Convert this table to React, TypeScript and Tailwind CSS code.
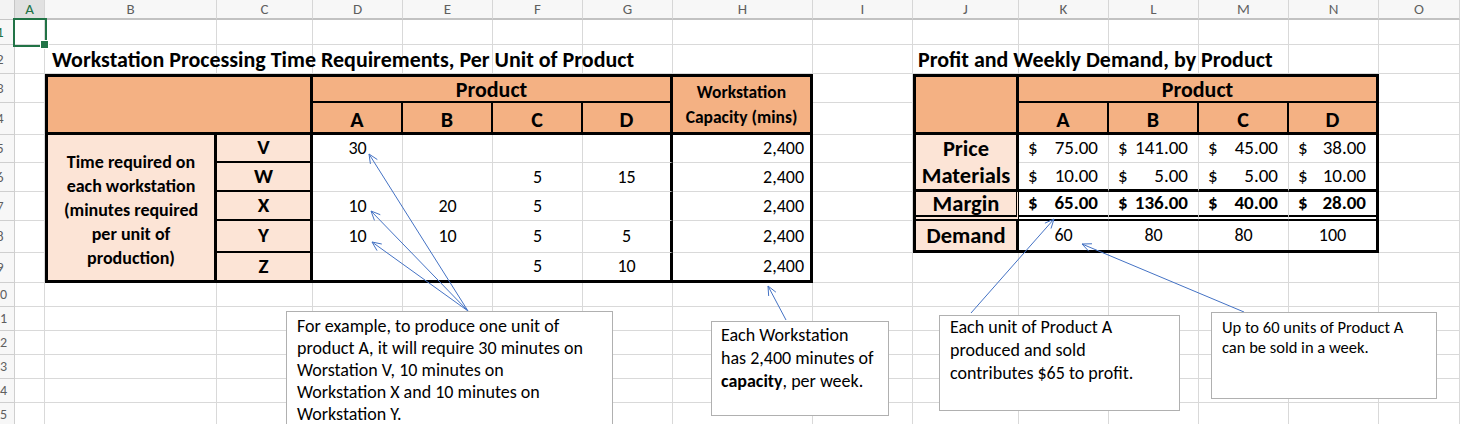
import * as React from "react";
import clsx from "clsx";

const letters = ["A", "B", "C", "D", "E", "F", "G", "H", "I", "J", "K", "L", "M", "N", "O"];
const rowNums = Array.from({ length: 15 }, (_, i) => i + 1);

const sheetCols =
  "grid-cols-[15px_30px_172px_96px_90px_90px_90px_90px_140px_100px_106px_90px_90px_90px_90px_81px]";
const sheetRows =
  "grid-rows-[20px_25px_29px_29px_32px_28px_29px_29px_32px_30px_24px_24px_24px_24px_24px_24px]";

const font = "font-['Carlito','Lato',sans-serif]";

// left table body: V..Z rows, columns A..D of product
const timeRows: { ws: string; vals: string[] }[] = [
  { ws: "V", vals: ["30", "", "", ""] },
  { ws: "W", vals: ["", "", "5", "15"] },
  { ws: "X", vals: ["10", "20", "5", ""] },
  { ws: "Y", vals: ["10", "10", "5", "5"] },
  { ws: "Z", vals: ["", "", "5", "10"] },
];

const money = [
  { label: "Price", vals: ["75.00", "141.00", "45.00", "38.00"] },
  { label: "Materials", vals: ["10.00", "5.00", "5.00", "10.00"] },
  { label: "Margin", vals: ["65.00", "136.00", "40.00", "28.00"] },
];

const Background = () => (
  <div className={`grid ${sheetCols} ${sheetRows} [grid-area:1/1]`}>
    <div className="border-r border-b border-[#c6c6c6] bg-[#f3f3f3]" />
    {letters.map((c) => (
      <div
        key={c}
        className={clsx(
          "flex items-center justify-center border-r border-b-2 border-r-[#d6d6d6] border-b-[#c2c2c2] text-[15px]",
          c === "A" ? "bg-[#e1e1e1] text-[#217346]" : "bg-[#f7f7f7] text-[#5f5f5f]"
        )}
      >
        {c}
      </div>
    ))}
    {rowNums.map((r) => (
      <React.Fragment key={r}>
        <div className="flex items-center overflow-hidden border-r border-b border-[#cfcfcf] bg-[#f7f7f7]">
          <span
            className={clsx(
              "-ml-[15px] w-[30px] shrink-0 text-center text-[14px]",
              r === 1 ? "text-[#217346]" : "text-[#5f5f5f]"
            )}
          >
            {r}
          </span>
        </div>
        {letters.map((c) => (
          <div key={c} className="border-r border-b border-[#d9d9d9] bg-white" />
        ))}
      </React.Fragment>
    ))}
  </div>
);

const WorkstationTable = () => (
  <div className="col-start-3 col-end-10 row-start-4 row-end-11 border-[3px] border-black">
    <div className="grid h-full grid-cols-[169px_96px_90px_90px_90px_90px_137px] grid-rows-[26px_32px_28px_29px_29px_32px_27px]">
      <div className="col-span-2 row-span-2 border-r-[3px] border-b-[3px] border-black bg-[#f4b183]" />
      <div className="col-span-4 flex items-center justify-center border-r-[3px] border-b-2 border-black bg-[#f4b183] text-[22px] font-bold">
        Product
      </div>
      <div className="row-span-2 flex flex-col items-center justify-center border-b-[3px] border-black bg-[#f4b183] text-[17.5px] leading-[25px] font-bold">
        <span>Workstation</span>
        <span>Capacity (mins)</span>
      </div>
      {["A", "B", "C", "D"].map((p) => (
        <div
          key={p}
          className={clsx(
            "flex items-center justify-center border-b-[3px] border-black bg-[#f4b183] pt-1 text-[22px] font-bold",
            p === "D" ? "border-r-[3px]" : "border-r-2"
          )}
        >
          {p}
        </div>
      ))}
      <div className="row-span-5 flex flex-col items-center justify-center border-r-[3px] border-black bg-[#fce4d6] pt-1 text-[18px] leading-[24px] font-bold">
        <span>Time required on</span>
        <span>each workstation</span>
        <span>(minutes required</span>
        <span>per unit of</span>
        <span>production)</span>
      </div>
      {timeRows.map((row, i) => (
        <React.Fragment key={row.ws}>
          <div
            className={clsx(
              "flex items-center justify-center border-r-[3px] border-black bg-[#fce4d6] text-[21px] font-bold",
              i < 4 && "border-b-2"
            )}
          >
            {row.ws}
          </div>
          {row.vals.map((v, j) => (
            <div
              key={j}
              className={clsx(
                "flex items-center justify-center text-[18px]",
                i < 4 && "border-b border-b-[#d9d9d9]",
                j < 3 ? "border-r border-r-[#d9d9d9]" : "border-r-[3px] border-r-black"
              )}
            >
              {v}
            </div>
          ))}
          <div
            className={clsx(
              "flex items-center justify-end pr-[6px] text-[18px]",
              i < 4 && "border-b border-b-[#d9d9d9]"
            )}
          >
            2,400
          </div>
        </React.Fragment>
      ))}
    </div>
  </div>
);

const ProfitTable = () => (
  <div className="col-start-11 col-end-16 row-start-4 row-end-10 border-[3px] border-black">
    <div className="grid h-full grid-cols-[103px_90px_90px_90px_87px] grid-rows-[26px_32px_28px_29px_29px_29px]">
      <div className="row-span-2 border-r-[3px] border-b-[3px] border-black bg-[#f4b183]" />
      <div className="col-span-4 flex items-center justify-center border-b-2 border-black bg-[#f4b183] text-[22px] font-bold">
        Product
      </div>
      {["A", "B", "C", "D"].map((p) => (
        <div
          key={p}
          className={clsx(
            "flex items-center justify-center border-b-[3px] border-black bg-[#f4b183] pt-1 text-[22px] font-bold",
            p !== "D" && "border-r-2"
          )}
        >
          {p}
        </div>
      ))}
      {money.map((row, i) => (
        <React.Fragment key={row.label}>
          <div
            className={clsx(
              "flex items-center justify-center border-r-[3px] border-black bg-[#fce4d6] text-[22.5px] font-bold",
              i === 1 && "border-b-[3px]",
              i === 2 && "border-b-[6px] border-double"
            )}
          >
            {row.label}
          </div>
          {row.vals.map((v, j) => (
            <div
              key={j}
              className={clsx(
                "flex items-center justify-between pr-[10px] pl-[9px] text-[19px]",
                i === 2 && "font-bold",
                i === 0 && "border-b border-b-[#d9d9d9]",
                i === 1 && "border-b-[3px] border-b-black",
                i === 2 && "border-b-[6px] border-double border-b-black",
                j < 3 && "border-r border-r-[#d9d9d9]"
              )}
            >
              <span>$</span>
              <span>{v}</span>
            </div>
          ))}
        </React.Fragment>
      ))}
      <div className="flex items-center justify-center border-r-[3px] border-black bg-[#fce4d6] text-[22.5px] font-bold">
        Demand
      </div>
      {["60", "80", "80", "100"].map((v, j) => (
        <div
          key={j}
          className={clsx(
            "flex items-center justify-center text-[18px]",
            j < 3 && "border-r border-r-[#d9d9d9]"
          )}
        >
          {v}
        </div>
      ))}
    </div>
  </div>
);

const Tables = () => (
  <div className={`grid ${sheetCols} ${sheetRows} [grid-area:1/1]`}>
    <div className="col-start-3 col-end-10 row-start-3 flex items-end pl-[7px] text-[22px] leading-[28px] font-bold whitespace-nowrap">
      Workstation Processing Time Requirements, Per Unit of Product
    </div>
    <div className="col-start-11 col-end-16 row-start-3 flex items-end pl-[5px] text-[22px] leading-[28px] font-bold whitespace-nowrap">
      Profit and Weekly Demand, by Product
    </div>
    <WorkstationTable />
    <ProfitTable />
  </div>
);

type Pt = [number, number, number, number];

const arrows: Pt[] = [
  [468, 311, 369, 154],
  [468, 311, 371, 211],
  [468, 311, 372, 242],
  [786, 320, 768, 286],
  [971, 313, 1054, 219],
  [1244, 312, 1082, 244],
];

const head = ([x1, y1, x2, y2]: Pt) => {
  const a = Math.atan2(y1 - y2, x1 - x2);
  const len = 10;
  const s = 0.42;
  const p1 = [x2 + len * Math.cos(a + s), y2 + len * Math.sin(a + s)];
  const p2 = [x2 + len * Math.cos(a - s), y2 + len * Math.sin(a - s)];
  return `${p1[0]},${p1[1]} ${x2},${y2} ${p2[0]},${p2[1]}`;
};

const Callouts = () => (
  <div className="pointer-events-none absolute inset-0">
    <svg width="1460" height="424" className="absolute inset-0">
      {arrows.map((p, i) => (
        <g key={i} stroke="#4472c4" strokeWidth="1" fill="none">
          <line x1={p[0]} y1={p[1]} x2={p[2]} y2={p[3]} />
          <polyline points={head(p)} />
        </g>
      ))}
    </svg>
    <div className="absolute top-[311px] left-[286px] h-[130px] w-[327px] border border-[#b0b0b0] bg-white px-[10px] pt-[3px] text-[18px] leading-[22px]">
      For example, to produce one unit of
      <br />
      product A, it will require 30 minutes on
      <br />
      Worstation V, 10 minutes on
      <br />
      Workstation X and 10 minutes on
      <br />
      Workstation Y.
    </div>
    <div className="absolute top-[321px] left-[711px] h-[95px] w-[178px] border border-[#b0b0b0] bg-white px-[9px] pt-[2px] text-[18px] leading-[23px]">
      Each Workstation
      <br />
      has 2,400 minutes of
      <br />
      <b>capacity</b>, per week.
    </div>
    <div className="absolute top-[315px] left-[939px] h-[96px] w-[241px] border border-[#b0b0b0] bg-white px-[10px] pt-0 text-[18px] leading-[23px]">
      Each unit of Product A
      <br />
      produced and sold
      <br />
      contributes $65 to profit.
    </div>
    <div className="absolute top-[312px] left-[1211px] h-[87px] w-[226px] border border-[#b0b0b0] bg-white px-[10px] pt-[4px] text-[16.5px] leading-[20px]">
      Up to 60 units of Product A
      <br />
      can be sold in a week.
    </div>
  </div>
);

export default function App() {
  return (
    <div className={`relative h-[424px] w-[1460px] overflow-hidden bg-white text-black ${font}`}>
      <div className="grid">
        <Background />
        <Tables />
      </div>
      {/* selected cell A1 */}
      <div className="pointer-events-none absolute top-[18px] left-[13px] h-[29px] w-[34px] border-2 border-[#217346]" />
      <div className="pointer-events-none absolute top-[40px] left-[40px] h-[9px] w-[9px] border border-white bg-[#217346]" />
      <Callouts />
    </div>
  );
}
